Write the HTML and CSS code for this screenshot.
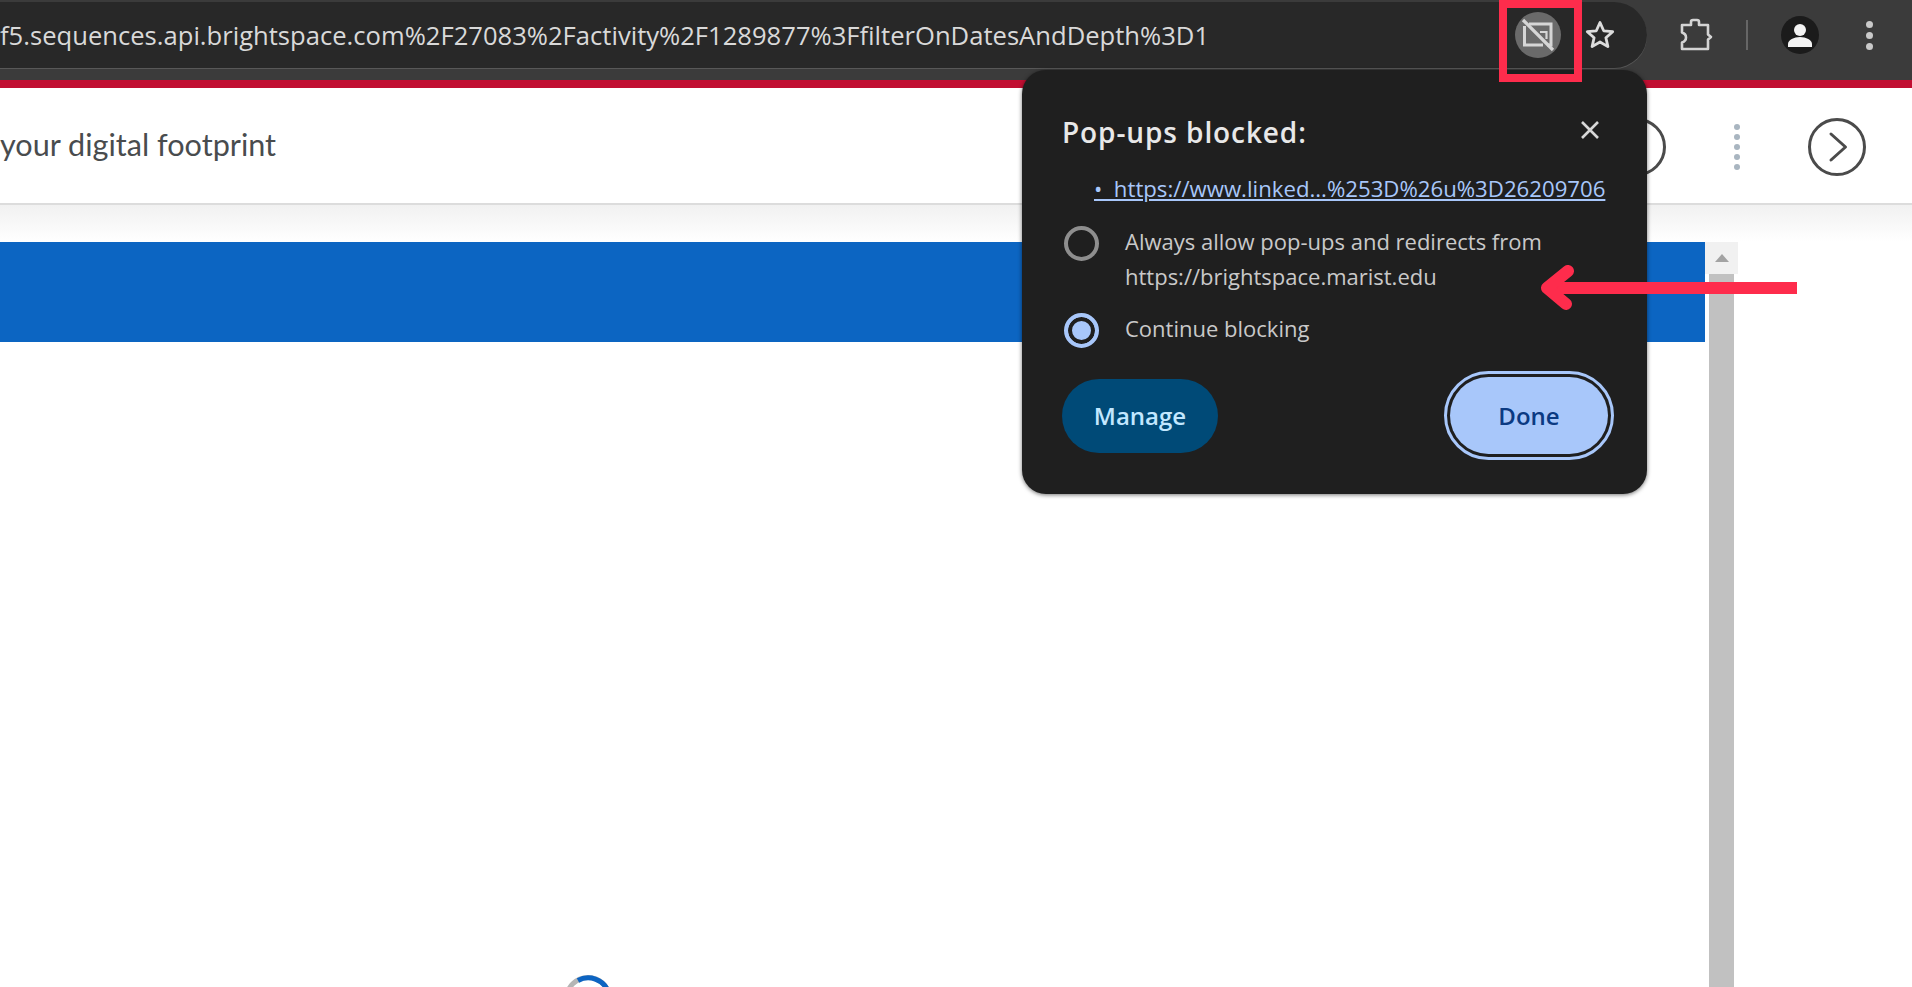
FILE: index.html
```html
<!DOCTYPE html>
<html lang="en">
<head>
<meta charset="utf-8">
<title>Pop-ups blocked</title>
<link rel="stylesheet" href="styles.css">
</head>
<body>
<div class="page">
  <header class="toolbar">
    <div class="omnibox">
      <div class="url"><span>f5.sequences.api.brightspace.com%2F27083%2Factivity%2F1289877%3FfilterOnDatesAndDepth%3D1</span></div>
      <div class="omni-actions">
        <span class="blocked-icon">
          <svg width="36" height="36" viewBox="0 0 36 36" fill="none" stroke="#d6d6d6" stroke-width="3">
            <path d="M9 7H31V28H27M4.500 9V28H23"/>
            <path d="M20 15h6.500v7" stroke-width="2.200"/>
            <path d="M3 3l30 30" stroke-width="3.200"/>
          </svg>
        </span>
        <svg class="star" width="32" height="32" viewBox="0 0 32 32" fill="none" stroke="#dcdcdc" stroke-width="2.800" stroke-linejoin="round">
          <path d="M16 3.500l3.700 8.300 9 .9-6.800 6 2 8.900-7.900-4.600-7.900 4.600 2-8.900-6.800-6 9-.9z"/>
        </svg>
      </div>
    </div>
    <div class="tools">
      <svg class="puzzle" width="34" height="36" viewBox="0 0 34 36" fill="none" stroke="#d4d4d4" stroke-width="2.600" stroke-linejoin="round">
        <path d="M3 8H12V5a2 2 0 0 1 2-2h4a2 2 0 0 1 2 2v3h9v9.500l3 2.500-3 2.500V32H3v-6.500c3-1 4-3 4-5s-1-4-4-5z"/>
      </svg>
      <span class="divider"></span>
      <span class="avatar">
        <svg width="26" height="26" viewBox="0 0 26 26" fill="#f4f4f4">
          <circle cx="13" cy="8" r="6"/>
          <path d="M1 25v-3c0-4 6-7 12-7s12 3 12 7v3z"/>
        </svg>
      </span>
      <span class="kebab"><i></i><i></i><i></i></span>
    </div>
  </header>
  <div class="accent"></div>
  <div class="course-bar">
    <div class="course-title"><span>your digital footprint</span></div>
    <div class="course-nav">
      <svg class="nav-btn" width="60" height="60" viewBox="0 0 60 60" fill="none" stroke="#4b4b4b" stroke-width="3" stroke-linecap="round" stroke-linejoin="round">
        <circle cx="30" cy="30" r="27.500"/>
        <path d="M36 17L21.500 30 36 43"/>
      </svg>
      <span class="nav-dots"><i></i><i></i><i></i><i></i><i></i></span>
      <svg class="nav-btn" width="60" height="60" viewBox="0 0 60 60" fill="none" stroke="#4b4b4b" stroke-width="3" stroke-linecap="round" stroke-linejoin="round">
        <circle cx="30" cy="30" r="27.500"/>
        <path d="M24 17l14.500 13L24 43"/>
      </svg>
    </div>
  </div>
  <div class="bar-shadow"></div>
  <main class="content">
    <div class="doc">
      <div class="banner"></div>
      <div class="doc-body">
        <svg class="spinner" width="48" height="48" viewBox="0 0 48 48" fill="none" stroke-width="5">
          <circle cx="24" cy="24" r="21.500" stroke="#b5b5b5"/>
          <path d="M14 5.500A21.500 21.500 0 0 1 44 16" stroke="#0d64c2"/>
        </svg>
      </div>
    </div>
    <div class="scrollbar">
      <div class="scroll-up"><span class="scroll-arrow"></span></div>
      <div class="scroll-thumb"></div>
    </div>
  </main>

  <section class="popup">
    <div class="popup-head">
      <h2>Pop-ups blocked:</h2>
      <svg width="20" height="20" viewBox="0 0 20 20" stroke="#d8d8d8" stroke-width="2.600"><path d="M2 2l16 16M18 2L2 18"/></svg>
    </div>
    <a class="popup-link" href="#">&bull;&nbsp; https://www.linked...%253D%26u%3D26209706</a>
    <div class="option">
      <span class="radio"></span>
      <span class="option-text">Always allow pop-ups and redirects from<br>https://brightspace.marist.edu</span>
    </div>
    <div class="option option-on">
      <span class="radio radio-on"></span>
      <span class="option-text">Continue blocking</span>
    </div>
    <div class="popup-actions">
      <button class="btn btn-manage">Manage</button>
      <span class="done-ring"><button class="btn btn-done">Done</button></span>
    </div>
  </section>

  <div class="highlight-box"></div>
  <svg class="arrow" width="262" height="50" viewBox="0 0 262 50" fill="none" stroke="#fe2c4c" stroke-width="12">
    <path d="M261 23H12"/>
    <path d="M32 6L11 23l19 16" stroke-linecap="round" stroke-linejoin="round"/>
  </svg>
</div>
</body>
</html>
```

FILE: styles.css
```css
* { box-sizing: border-box; }
html, body { margin: 0; padding: 0; background: #fff; }
.page {
  position: relative;
  width: 1912px;
  height: 987px;
  overflow: hidden;
  display: flex;
  flex-direction: column;
  font-family: "Open Sans", "Noto Sans", sans-serif;
}

/* browser toolbar */
.toolbar {
  height: 80px;
  flex: none;
  background: #3b3b3b;
  display: flex;
  align-items: flex-start;
  padding-top: 2px;
}
.omnibox {
  width: 1647px;
  height: 66px;
  flex: none;
  background: #282828;
  border-radius: 0 33px 33px 0;
  box-shadow: 0 1px 0 #585858;
  display: flex;
  align-items: center;
}
.url {
  width: 1208px;
  flex: none;
  display: flex;
  justify-content: flex-start;
  white-space: nowrap;
  font-size: 25.6px;
  color: #d9d9d9;
}
.omni-actions {
  margin-left: 307px;
  display: flex;
  align-items: center;
  gap: 23px;
}
.blocked-icon {
  width: 46px;
  height: 46px;
  border-radius: 50%;
  background: #6a6a6a;
  display: flex;
  align-items: center;
  justify-content: center;
}
.tools {
  flex: 1;
  height: 66px;
  display: flex;
  align-items: center;
  padding-left: 32px;
}
.divider {
  width: 2px;
  height: 30px;
  margin-left: 33px;
  background: #666;
}
.avatar {
  width: 38px;
  height: 38px;
  margin-left: 33px;
  border-radius: 50%;
  background: #1b1b1b;
  display: flex;
  align-items: center;
  justify-content: center;
  overflow: hidden;
}
.kebab {
  margin-left: 47px;
  display: flex;
  flex-direction: column;
  gap: 4px;
}
.kebab i {
  width: 7px;
  height: 7px;
  border-radius: 50%;
  background: #c9c9c9;
}
.accent {
  height: 8px;
  flex: none;
  background: #c10f32;
}

/* course bar */
.course-bar {
  height: 117px;
  flex: none;
  background: #fff;
  border-bottom: 2px solid #dcdcdc;
  display: flex;
  align-items: center;
  justify-content: space-between;
}
.course-title {
  width: 277px;
  margin-bottom: 2px;
  white-space: nowrap;
  font-family: Lato, "Open Sans", sans-serif;
  font-size: 30.6px;
  color: #494c4e;
}
.course-nav {
  display: flex;
  align-items: center;
  margin: 2px 45px 0 0;
}
.nav-dots {
  margin: 0 67px;
  display: flex;
  flex-direction: column;
  gap: 4px;
}
.nav-dots i {
  width: 6px;
  height: 6px;
  border-radius: 50%;
  background: #a9b5c0;
}
.bar-shadow {
  height: 37px;
  flex: none;
  background: linear-gradient(#f1f1f1, #fff);
}

/* page content */
.content {
  flex: 1;
  min-height: 0;
  display: flex;
}
.doc {
  width: 1705px;
  flex: none;
  display: flex;
  flex-direction: column;
}
.banner {
  height: 100px;
  flex: none;
  background: #0c65c2;
}
.doc-body {
  flex: 1;
  padding: 633px 0 0 564px;
}
.spinner { display: block; }
.scrollbar {
  width: 33px;
  flex: none;
  display: flex;
  flex-direction: column;
  align-items: center;
}
.scroll-up {
  width: 33px;
  height: 32px;
  flex: none;
  background: #f1f1f1;
  display: flex;
  align-items: center;
  justify-content: center;
}
.scroll-arrow {
  width: 0;
  height: 0;
  border-left: 7px solid transparent;
  border-right: 7px solid transparent;
  border-bottom: 8px solid #a3a3a3;
}
.scroll-thumb {
  width: 25px;
  flex: 1;
  background: #c1c1c1;
}

/* pop-up bubble */
.popup {
  position: absolute;
  left: 1022px;
  top: 70px;
  width: 625px;
  height: 424px;
  padding: 44px 33px 0 40px;
  background: #1f1f1f;
  border-radius: 24px;
  box-shadow: 0 1px 4px rgba(0, 0, 0, .55);
  color: #d4d4d4;
  display: flex;
  flex-direction: column;
}
.popup-head {
  display: flex;
  align-items: center;
  justify-content: space-between;
  padding-right: 14px;
  height: 32px;
}
.popup-head h2 {
  margin: 0;
  padding-top: 4px;
  font-size: 28px;
  font-weight: 600;
  letter-spacing: .9px;
  color: #e8e8e8;
}
.popup-link {
  margin: 29px 0 0 32px;
  font-size: 22.2px;
  line-height: 28px;
  color: #a8c7fa;
  white-space: nowrap;
}
.option {
  display: flex;
  align-items: flex-start;
  gap: 26px;
  margin-top: 21px;
  font-size: 22px;
  line-height: 35px;
  color: #c9c9c9;
}
.option-on { margin-top: 17px; }
.radio {
  width: 35px;
  height: 35px;
  flex: none;
  margin: 2px 0 0 2px;
  border-radius: 50%;
  border: 4px solid #8e8e8e;
}
.radio-on {
  border-color: #a8c7fa;
  background: #a8c7fa;
  box-shadow: inset 0 0 0 4px #1f1f1f;
}
.popup-actions {
  margin-top: 23px;
  display: flex;
  align-items: center;
  justify-content: space-between;
}
.btn {
  border: 0;
  padding: 0;
  font-family: inherit;
  font-size: 24px;
  font-weight: 600;
  border-radius: 37px;
  height: 74px;
}
.btn-manage {
  width: 156px;
  background: #004a77;
  color: #c2e7ff;
}
.done-ring {
  width: 170px;
  height: 89px;
  border-radius: 45px;
  border: 3px solid #a8c7fa;
  padding: 3px;
  display: flex;
}
.btn-done {
  flex: 1;
  height: auto;
  border-radius: 40px;
  background: #a8c7fa;
  color: #0b3a82;
}

/* annotations */
.highlight-box {
  position: absolute;
  left: 1499px;
  top: 0;
  width: 83px;
  height: 82px;
  border: 8px solid #fe2c4c;
}
.arrow {
  position: absolute;
  left: 1536px;
  top: 265px;
}
```
